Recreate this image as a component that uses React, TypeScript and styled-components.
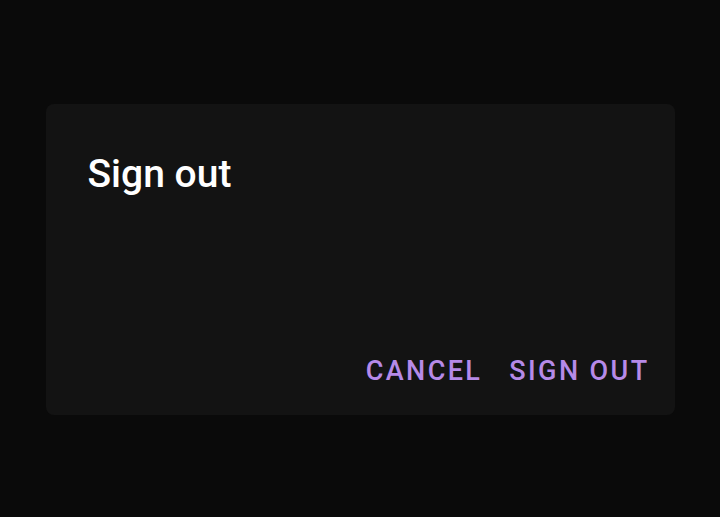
import React from "react";
import styled, { createGlobalStyle } from "styled-components";

const Global = createGlobalStyle`
  html, body {
    margin: 0;
    padding: 0;
    background: #0a0a0a;
    font-family: Roboto, "Noto Sans", sans-serif;
  }
`;

const Screen = styled.div`
  width: 720px;
  height: 517px;
  display: flex;
  align-items: flex-start;
  justify-content: center;
  padding-top: 104px;
  box-sizing: border-box;
`;

const Dialog = styled.div`
  width: 629px;
  height: 311px;
  background: #131313;
  border-radius: 8px;
  box-sizing: border-box;
  display: flex;
  flex-direction: column;
  justify-content: space-between;
  padding: 47px 25px 24px 42px;
`;

const Title = styled.h2`
  margin: 0;
  color: #ffffff;
  font-size: 39px;
  font-weight: 500;
  line-height: 46px;
`;

const Actions = styled.div`
  display: flex;
  justify-content: flex-end;
  gap: 27px;
`;

const TextButton = styled.button`
  background: none;
  border: none;
  padding: 0;
  color: #b68ae8;
  font-family: Roboto, sans-serif;
  font-size: 27px;
  font-weight: 500;
  letter-spacing: 2.4px;
  line-height: 40px;
  cursor: pointer;
`;

export default function App() {
  return (
    <>
      <Global />
      <Screen>
        <Dialog>
          <Title>Sign out</Title>
          <Actions>
            <TextButton>CANCEL</TextButton>
            <TextButton>SIGN OUT</TextButton>
          </Actions>
        </Dialog>
      </Screen>
    </>
  );
}
